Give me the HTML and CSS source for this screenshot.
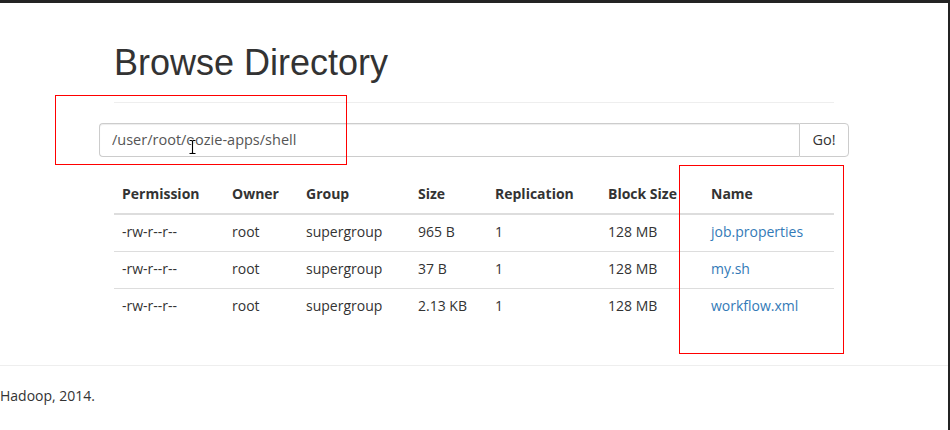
FILE: index.html
```html
<!DOCTYPE html>
<html lang="en">
<head>
<meta charset="utf-8">
<title>Browse Directory</title>
<link rel="stylesheet" href="styles.css">
</head>
<body>
<div class="frame">
  <div class="container">
    <div class="page-header">
      <h1>Browse Directory</h1>
    </div>
    <form class="input-group">
      <input class="path-input" type="text" value="/user/root/oozie-apps/shell">
      <button class="go-btn" type="button">Go!</button>
    </form>
    <table class="table">
      <colgroup>
        <col class="c-perm"><col class="c-owner"><col class="c-group"><col class="c-size"><col class="c-repl"><col class="c-block"><col class="c-name">
      </colgroup>
      <thead>
        <tr><th>Permission</th><th>Owner</th><th>Group</th><th>Size</th><th>Replication</th><th>Block Size</th><th>Name</th></tr>
      </thead>
      <tbody>
        <tr><td>-rw-r--r--</td><td>root</td><td>supergroup</td><td>965 B</td><td>1</td><td>128 MB</td><td><a href="#">job.properties</a></td></tr>
        <tr><td>-rw-r--r--</td><td>root</td><td>supergroup</td><td>37 B</td><td>1</td><td>128 MB</td><td><a href="#">my.sh</a></td></tr>
        <tr><td>-rw-r--r--</td><td>root</td><td>supergroup</td><td>2.13 KB</td><td>1</td><td>128 MB</td><td><a href="#">workflow.xml</a></td></tr>
      </tbody>
    </table>
  </div>
  <hr class="footer-rule">
  <p class="footer-text">Hadoop, 2014.</p>
</div>

<div class="mark mark-path"></div>
<div class="mark mark-name"></div>
<svg class="ibeam" width="9" height="16" viewBox="0 0 9 16" aria-hidden="true">
  <path d="M1.5 1.5 H3.5 Q4.5 1.5 4.5 2.5 V13.5 Q4.5 14.5 3.5 14.5 H1.5 M7.5 1.5 H5.5 Q4.5 1.5 4.5 2.5 M4.5 13.5 Q4.5 14.5 5.5 14.5 H7.5" fill="none" stroke="#fff" stroke-width="2.6"/>
  <path d="M1.5 1.5 H3.5 Q4.5 1.5 4.5 2.5 V13.5 Q4.5 14.5 3.5 14.5 H1.5 M7.5 1.5 H5.5 Q4.5 1.5 4.5 2.5 M4.5 13.5 Q4.5 14.5 5.5 14.5 H7.5" fill="none" stroke="#000" stroke-width="1.1"/>
</svg>
</body>
</html>
```

FILE: styles.css
```css
html, body {
  margin: 0;
  padding: 0;
  background: #fff;
}

body {
  font-family: "Open Sans", "Noto Sans", sans-serif;
  font-size: 14px;
  line-height: 20px;
  color: #333;
}

.frame {
  box-sizing: border-box;
  min-height: 100vh;
  border-top: 3px solid #232323;
  border-right: 2px solid #232323;
  overflow: hidden;
}

.container {
  display: flow-root;
  width: 720px;
  margin-left: 114px;
}

.page-header {
  margin: 40px 0 20px;
  padding-bottom: 9px;
  border-bottom: 1px solid #eee;
}

.page-header h1 {
  margin: 0 0 10px;
  font-family: "Liberation Sans", Arial, sans-serif;
  font-size: 36px;
  font-weight: 500;
  line-height: 1.1;
  color: #333;
}

.input-group {
  display: flex;
  margin: 0 -15px 20px;
}

.path-input {
  flex: 1;
  box-sizing: border-box;
  height: 34px;
  margin: 0;
  padding: 6px 12px;
  font-family: "Open Sans", "Noto Sans", sans-serif;
  font-size: 14.5px;
  line-height: 20px;
  color: #555;
  background: #fff;
  border: 1px solid #ccc;
  border-right: 0;
  border-radius: 4px 0 0 4px;
  box-shadow: inset 0 1px 1px rgba(0, 0, 0, .075);
  outline: none;
}

.go-btn {
  box-sizing: border-box;
  width: 50px;
  height: 34px;
  margin: 0;
  padding: 6px 0;
  font-family: "Open Sans", "Noto Sans", sans-serif;
  font-size: 14.5px;
  line-height: 20px;
  color: #333;
  background: #fff;
  border: 1px solid #ccc;
  border-radius: 0 4px 4px 0;
}

.table {
  width: 720px;
  margin-bottom: 20px;
  border-collapse: collapse;
  border-spacing: 0;
  table-layout: fixed;
}

.c-perm { width: 110px; }
.c-owner { width: 74px; }
.c-group { width: 112px; }
.c-size { width: 77px; }
.c-repl { width: 113px; }
.c-block { width: 103px; }
.c-name { width: 131px; }

.table th,
.table td {
  padding: 7px 8px 9px;
  line-height: 20px;
  text-align: left;
  vertical-align: top;
  white-space: nowrap;
}

.table th {
  font-weight: 700;
  border-bottom: 2px solid #ddd;
}

.table td {
  border-top: 1px solid #ddd;
}

.table tbody tr:first-child td {
  border-top: 0;
}

.table a {
  color: #337ab7;
  text-decoration: none;
}

.footer-rule {
  margin: 20px 0;
  border: 0;
  border-top: 1px solid #eee;
  height: 0;
}

.footer-text {
  margin: 0 0 10px;
}

.mark {
  position: absolute;
  box-sizing: border-box;
  border: 1px solid #f00;
}

.mark-path {
  left: 55px;
  top: 95px;
  width: 292px;
  height: 70px;
}

.mark-name {
  left: 679px;
  top: 165px;
  width: 165px;
  height: 189px;
}

.ibeam {
  position: absolute;
  left: 188px;
  top: 139px;
}
```
